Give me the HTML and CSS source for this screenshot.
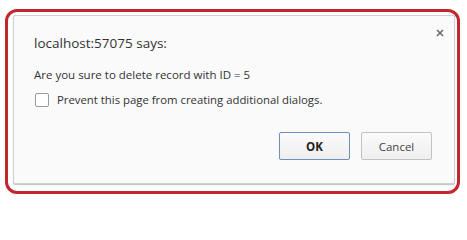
FILE: index.html
```html
<!DOCTYPE html>
<html>
<head>
<meta charset="utf-8">
<link rel="stylesheet" href="styles.css">
</head>
<body>
<div class="frame">
  <div class="dialog">
    <div class="head">
      <div class="title">localhost:57075 says:</div>
      <svg class="close" width="8" height="8" viewBox="0 0 8 8"><path d="M1 1L7 7M7 1L1 7" stroke="#6b6b6b" stroke-width="1.6"/></svg>
    </div>
    <div class="message">Are you sure to delete record with ID = 5</div>
    <label class="option"><span class="box"></span><span>Prevent this page from creating additional dialogs.</span></label>
    <div class="buttons">
      <button class="btn ok">OK</button>
      <button class="btn">Cancel</button>
    </div>
  </div>
</div>
</body>
</html>
```
FILE: styles.css
```css
html, body { margin: 0; padding: 0; background: #fff; }
body { font-family: "Open Sans", "Noto Sans", sans-serif; color: #222; }
.frame {
  margin: 9px 0 0 5px;
  box-sizing: content-box;
  width: 442px;
  height: 169px;
  border: 3px solid #c4262e;
  border-radius: 12px;
  padding: 3px 2px 7px 5px;
}
.dialog {
  box-sizing: border-box;
  width: 442px;
  height: 169px;
  background: #fafafa;
  border: 1px solid #cfcfcf;
  border-radius: 2px;
  box-shadow: 0 1px 1px rgba(0,0,0,0.25);
  padding: 0 0 0 20px;
  display: flex;
  flex-direction: column;
}
.head { display: flex; justify-content: space-between; align-items: flex-start; padding-top: 18px; }
.title { font-size: 13.5px; line-height: 19px; color: #333; }
.close { margin: -5px 10px 0 0; }
.message { font-size: 11.5px; line-height: 16px; margin-top: 14px; color: #333; }
.option { display: flex; align-items: center; gap: 8px; margin-top: 9px; font-size: 11.35px; line-height: 16px; color: #333; }
.box { width: 12px; height: 12px; border: 1px solid #9a9a9a; border-radius: 2px; background: #fff; margin-left: 1px; }
.buttons { display: flex; justify-content: flex-end; gap: 11px; margin-top: 24px; padding-right: 22px; }
.btn {
  width: 71px; height: 28px;
  font-family: "Open Sans", "Noto Sans", sans-serif;
  font-size: 11.5px; color: #444;
  background: linear-gradient(#fbfbfb, #efefef);
  border: 1px solid #c2c2c2; border-radius: 2px;
  padding: 0;
}
.ok { border-color: #6d8fb8; font-weight: bold; color: #222; }
```
